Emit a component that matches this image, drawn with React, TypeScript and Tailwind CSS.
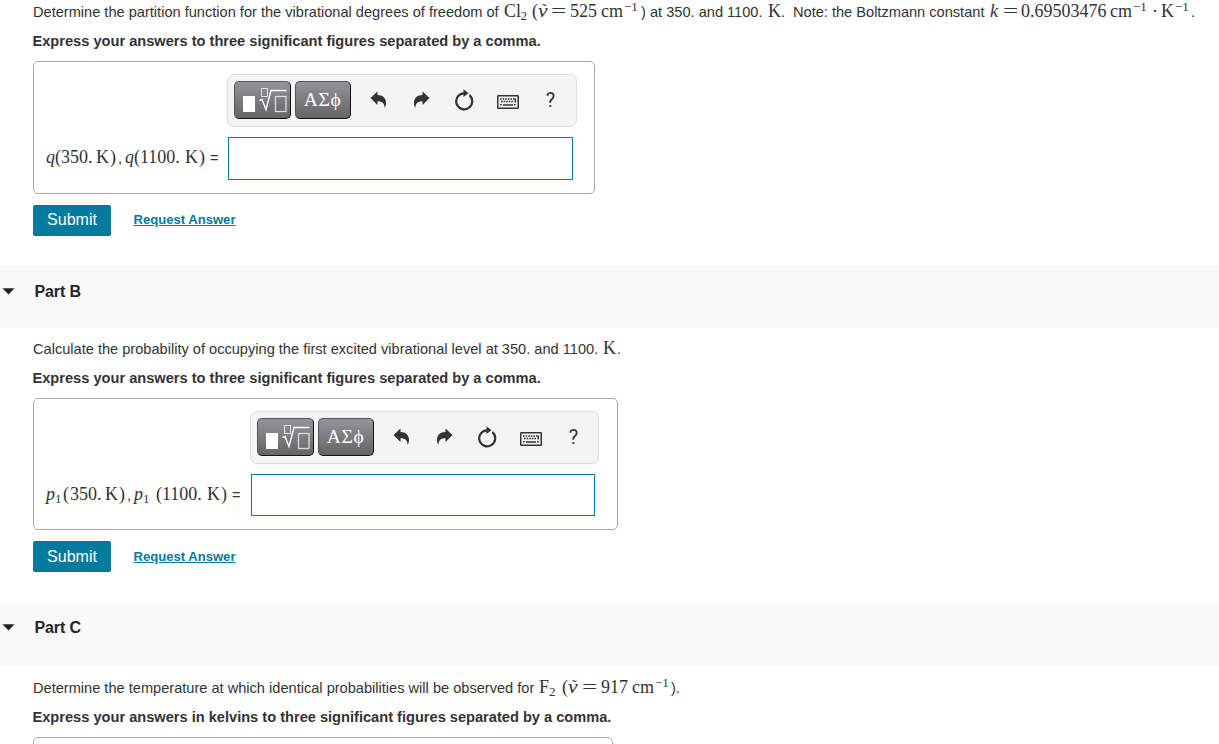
import React from "react";

type SegProps = { children: React.ReactNode; className?: string };

const sans = "font-['Liberation_Sans',Arial,sans-serif]";
const serif = "font-['Liberation_Serif','Times_New_Roman',serif] text-[18px]";

// Plain prose run inside a formula line.
function Txt({ children, className = "" }: SegProps) {
  return <span className={`shrink-0 whitespace-pre text-[14.6px] ${className}`}>{children}</span>;
}

// Upright or italic maths run.
function M({ children, className = "" }: SegProps) {
  return <span className={`shrink-0 whitespace-pre ${serif} ${className}`}>{children}</span>;
}

function Eq({ className = "" }: { className?: string }) {
  return (
    <M className={className}>
      <span className="inline-block origin-left scale-x-[1.5]">=</span>
    </M>
  );
}

// Italic nu with a tilde accent centred above it.
function NuTilde({ className = "" }: { className?: string }) {
  return (
    <M className={`relative italic ${className}`}>
      <span className="inline-block origin-left scale-x-[1.2]">ν</span>
      <span className="absolute left-[4px] -top-[1px] text-[14px] not-italic">˜</span>
    </M>
  );
}

function Sup({ children, className = "" }: SegProps) {
  return (
    <span className={`shrink-0 whitespace-pre font-['Liberation_Serif','Times_New_Roman',serif] text-[13px] ${className}`}>
      <span className="relative -top-[6px]">{children}</span>
    </span>
  );
}

function Sub({ children, className = "" }: SegProps) {
  return (
    <span className={`shrink-0 whitespace-pre font-['Liberation_Serif','Times_New_Roman',serif] text-[13px] ${className}`}>
      <span className="relative top-[3px]">{children}</span>
    </span>
  );
}

function Line({ children, className = "" }: SegProps) {
  return <div className={`flex h-[22px] items-baseline leading-[22px] ${className}`}>{children}</div>;
}

function Instruction({ children, className = "" }: SegProps) {
  return <p className={`h-[20px] whitespace-nowrap pl-[32.5px] text-[14.62px] font-bold leading-[20px] ${className}`}>{children}</p>;
}

const keyBtn =
  "flex h-[38px] items-center justify-center rounded-[5px] border border-[#555] border-b-[#111] border-r-[#111] bg-linear-to-b from-[#95939c] to-[#656565] text-white";

function Toolbar({ className = "" }: { className?: string }) {
  return (
    <div className={`flex h-[53px] items-center rounded-[7px] border border-[#dddddd] bg-[#f4f4f4] pb-[1px] pl-[6px] ${className}`}>
      <div className={`${keyBtn} w-[57px] shrink-0`}>
        <svg width="55" height="36" viewBox="0 0 55 36" fill="none">
          <rect x="8" y="14" width="12" height="16" fill="#fff" />
          <rect x="26.500" y="6.500" width="6" height="8" stroke="#e2e2e2" />
          <path d="M24.500 18.500l2.500-1 4 10L36 8.500h15.500" stroke="#fff" strokeWidth="1.400" />
          <rect x="40.500" y="14.500" width="10.500" height="15" stroke="#dcdcdc" strokeWidth="1.300" />
        </svg>
      </div>
      <div className={`${keyBtn} ml-[4px] w-[56px] shrink-0 pb-[1px] pr-[1px] font-['Liberation_Serif',serif] text-[19.5px] tracking-[0.600px]`}>ΑΣϕ</div>
      <div className="ml-[6px] flex items-center text-[#333]">
        <div className="flex w-[43px] justify-center">
          <svg width="17" height="18" viewBox="0 0 17 18" fill="currentColor">
            <path d="M0.500 7L7.500 0.500v3.500C13 4 16 7.500 16 12c0 2-.6 3.800-1.500 5C14.800 13 12.500 10.300 7.500 10.300v3.700z" />
          </svg>
        </div>
        <div className="flex w-[43px] justify-center">
          <svg width="17" height="18" viewBox="0 0 17 18" fill="currentColor">
            <path d="M16.500 7L9.500 0.500v3.500C4 4 1 7.500 1 12c0 2 .6 3.800 1.500 5C2.200 13 4.500 10.300 9.500 10.300v3.700z" />
          </svg>
        </div>
        <div className="flex w-[43px] justify-center pr-[1px]">
          <svg width="20" height="22" viewBox="0 0 20 22" fill="none">
            <path d="M15.400 6.200A8 8 0 1 1 10 4.300" stroke="currentColor" strokeWidth="2.200" />
            <path d="M9.500 0.300L14.500 4.300L9.500 8z" fill="currentColor" />
          </svg>
        </div>
        <div className="flex w-[43px] justify-center pt-[4px]">
          <svg width="22" height="14" viewBox="0 0 22 14">
            <rect x="0.750" y="0.750" width="20.500" height="12.500" rx="0.600" fill="none" stroke="currentColor" strokeWidth="1.500" />
            <path d="M3 4h16M4 6.500h13M3 9.800h2M17 9.800h2" stroke="currentColor" strokeWidth="1.500" strokeDasharray="1.600 1" />
            <path d="M6 10h10M18.300 3.500v4" stroke="currentColor" strokeWidth="1.500" />
          </svg>
        </div>
        <div className="flex w-[43px] justify-center font-[Roboto,sans-serif] text-[20px] leading-[38px]">?</div>
      </div>
    </div>
  );
}

function Actions({ labelClass }: { labelClass: string }) {
  return (
    <div className="flex h-[31px] items-center pl-[33px]">
      <button className={`h-[31px] w-[78px] rounded-[2px] bg-[#047a9c] text-[16px] text-white ${labelClass}`}>Submit</button>
      <a className={`ml-[22.500px] text-[13.080px] font-bold text-[#047a9c] underline ${labelClass}`}>Request Answer</a>
    </div>
  );
}

function PartHeader({ title, className }: { title: string; className: string }) {
  return (
    <div className={`flex h-[63px] bg-[#f9f9f9] ${className}`}>
      <svg className="ml-[2px] mt-[6px]" width="13" height="7" viewBox="0 0 13 7">
        <path d="M0.500 0.300h12L6.500 6.500z" fill="#222" />
      </svg>
      <h2 className="ml-[19.500px] h-[20px] text-[16px] font-bold leading-[20px] tracking-[-0.100px] text-[#252525]">{title}</h2>
    </div>
  );
}

export default function App() {
  return (
    <main className={`h-[744px] w-[1219px] overflow-hidden bg-white text-[#333] ${sans}`}>
      <section>
        <Line className="pl-[33px]">
          <Txt className="w-[471px]">Determine the partition function for the vibrational degrees of freedom of</Txt>
          <M className="w-[16.500px]">Cl</M>
          <Sub className="w-[11.500px]">2</Sub>
          <M className="w-[6px]">(</M>
          <NuTilde className="w-[13px]" />
          <Eq className="w-[19px]" />
          <M className="w-[31px]">525</M>
          <M className="w-[23px]">cm</M>
          <Sup className="w-[17px]">−1</Sup>
          <Txt className="w-[9px]">)</Txt>
          <Txt className="w-[118px]">at 350. and 1100.</Txt>
          <M className="w-[13px]">K</M>
          <Txt className="w-[12px]">.</Txt>
          <Txt className="w-[197px]">Note: the Boltzmann constant</Txt>
          <M className="w-[13px] italic">k</M>
          <Eq className="w-[18px]" />
          <M className="w-[89px]">0.69503476</M>
          <M className="w-[23px]">cm</M>
          <Sup className="w-[19px]">−1</Sup>
          <M className="w-[9px]">·</M>
          <M className="w-[14px]">K</M>
          <Sup className="w-[16px]">−1</Sup>
          <Txt>.</Txt>
        </Line>
        <Instruction className="mt-[9px]">Express your answers to three significant figures separated by a comma.</Instruction>
        <div className="ml-[33px] mt-[10px] flex h-[133px] w-[562px] rounded-[5px] border border-[#a6a8ab]">
          <Line className="mt-[84px] w-[193px] shrink-0 pl-[12px]">
            <M className="w-[9px] italic">q</M>
            <M className="w-[6px]">(</M>
            <M className="w-[35px]">350.</M>
            <M className="w-[14px]">K</M>
            <M className="w-[8px]">)</M>
            <Txt className="w-[7px]">,</Txt>
            <M className="w-[9px] italic">q</M>
            <M className="w-[6px]">(</M>
            <M className="w-[45px]">1100.</M>
            <M className="w-[14px]">K</M>
            <M className="w-[11px]">)</M>
            <Txt>=</Txt>
          </Line>
          <div className="pt-[12px]">
            <Toolbar className="w-[350px]" />
            <div className="ml-[1px] mt-[10px] h-[43px] w-[345px] border border-[#047a9c]" />
          </div>
        </div>
        <div className="mt-[11px]">
          <Actions labelClass="pb-[2px]" />
        </div>
      </section>

      <section className="mt-[29px]">
        <PartHeader title="Part B" className="pt-[17px]" />
        <Line className="mt-[9px] pl-[33px]">
          <Txt className="w-[570px]">Calculate the probability of occupying the first excited vibrational level at 350. and 1100.</Txt>
          <M className="w-[14px]">K</M>
          <Txt>.</Txt>
        </Line>
        <Instruction className="mt-[9px]">Express your answers to three significant figures separated by a comma.</Instruction>
        <div className="ml-[33px] mt-[10px] flex h-[132px] w-[585px] rounded-[5px] border border-[#a6a8ab]">
          <Line className="mt-[84px] w-[216px] shrink-0 pl-[12px]">
            <M className="w-[9px] italic">p</M>
            <Sub className="w-[8px]">1</Sub>
            <M className="w-[7px]">(</M>
            <M className="w-[35px]">350.</M>
            <M className="w-[14px]">K</M>
            <M className="w-[8px]">)</M>
            <Txt className="w-[7px]">,</Txt>
            <M className="w-[9px] italic">p</M>
            <Sub className="w-[13px]">1</Sub>
            <M className="w-[6px]">(</M>
            <M className="w-[45px]">1100.</M>
            <M className="w-[14px]">K</M>
            <M className="w-[11px]">)</M>
            <Txt>=</Txt>
          </Line>
          <div className="pt-[12px]">
            <Toolbar className="w-[349px]" />
            <div className="ml-[1px] mt-[10px] h-[42px] w-[344px] border border-[#047a9c]" />
          </div>
        </div>
        <div className="mt-[11px]">
          <Actions labelClass="pb-0" />
        </div>
      </section>

      <section className="mt-[30px]">
        <PartHeader title="Part C" className="pt-[16px]" />
        <Line className="mt-[11px] pl-[33px]">
          <Txt className="w-[506px]">Determine the temperature at which identical probabilities will be observed for</Txt>
          <M className="w-[10px]">F</M>
          <Sub className="w-[13px]">2</Sub>
          <M className="w-[6px]">(</M>
          <NuTilde className="w-[14px]" />
          <Eq className="w-[19px]" />
          <M className="w-[31px]">917</M>
          <M className="w-[23px]">cm</M>
          <Sup className="w-[16px]">−1</Sup>
          <Txt>).</Txt>
        </Line>
        <Instruction className="mt-[9px]">Express your answers in kelvins to three significant figures separated by a comma.</Instruction>
        <div className="ml-[33px] mt-[10px] h-[133px] w-[580px] rounded-[5px] border border-[#a6a8ab]" />
      </section>
    </main>
  );
}
